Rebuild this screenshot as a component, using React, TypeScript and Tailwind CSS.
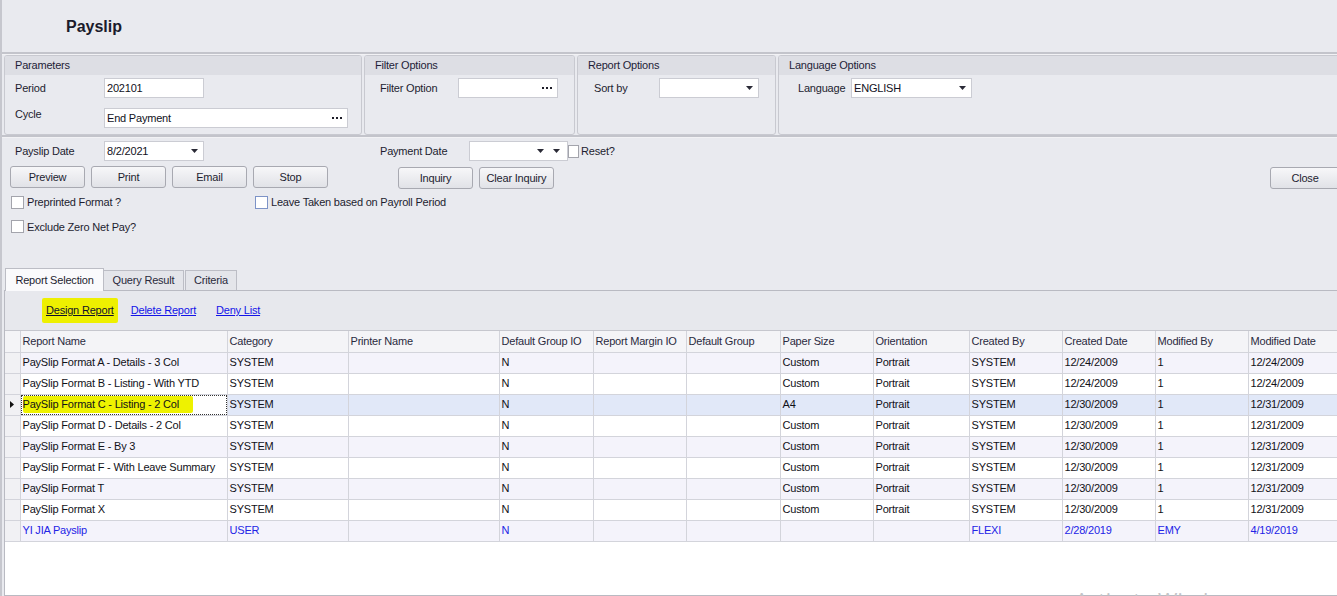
import React from 'react'

function Arrow() {
  return (
    <svg width="7" height="4" viewBox="0 0 7 4" className="shrink-0">
      <path d="M0 0h7L3.5 4z" fill="#2a2a36" />
    </svg>
  )
}

function Dots() {
  return (
    <svg width="10" height="2" viewBox="0 0 10 2" className="shrink-0">
      <rect x="0" y="0" width="2" height="2" fill="#1d1d28" />
      <rect x="4" y="0" width="2" height="2" fill="#1d1d28" />
      <rect x="8" y="0" width="2" height="2" fill="#1d1d28" />
    </svg>
  )
}

function Field({ w, value, kind }: { w: string; value?: string; kind?: 'dots' | 'arrow' | 'double' }) {
  return (
    <div className={`${w} h-[20px] shrink-0 bg-white border border-[#cbccd3] flex items-center pl-[2px] pr-[5px] text-[#111122]`}>
      <span className="flex-1 truncate">{value}</span>
      {kind == 'dots' && <Dots />}
      {kind == 'arrow' && <Arrow />}
      {kind == 'double' && (
        <div className="flex gap-[9px] pr-[2px]">
          <Arrow />
          <Arrow />
        </div>
      )}
    </div>
  )
}

function Btn({ label, w = 'w-[75px]' }: { label: string; w?: string }) {
  return (
    <div className={`${w} h-[22px] shrink-0 rounded-[3px] border border-[#a8a9b1] bg-gradient-to-b from-[#f7f7f9] to-[#e1e2e7] flex items-center justify-center text-[#1d1d30]`}>
      {label}
    </div>
  )
}

function Check({ blue }: { blue?: boolean }) {
  return (
    <div className={`w-[13px] h-[13px] shrink-0 bg-white border ${blue ? 'border-[#7d93c7]' : 'border-[#a3a4ac]'}`} />
  )
}

function Group({ title, w, children }: { title: string; w: string; children?: React.ReactNode }) {
  return (
    <div className={`${w} h-[80px] border border-[#c8c9d0] rounded-[3px] flex flex-col overflow-hidden`}>
      <div className="h-[19px] shrink-0 bg-[#dddee4] pl-[10px] flex items-center text-[#1d1d38]">{title}</div>
      <div className="flex-1">{children}</div>
    </div>
  )
}

const cols = [15, 207, 121, 151, 94, 93, 94, 93, 96, 93, 93, 93, 120]
const heads = ['', 'Report Name', 'Category', 'Printer Name', 'Default Group IO', 'Report Margin IO', 'Default Group', 'Paper Size', 'Orientation', 'Created By', 'Created Date', 'Modified By', 'Modified Date']

const rows = [
  ['PaySlip Format A - Details - 3 Col', 'SYSTEM', 'Custom', 'Portrait', 'SYSTEM', '12/24/2009', '1', '12/24/2009'],
  ['PaySlip Format B - Listing - With YTD', 'SYSTEM', 'Custom', 'Portrait', 'SYSTEM', '12/24/2009', '1', '12/24/2009'],
  ['PaySlip Format C - Listing - 2 Col', 'SYSTEM', 'A4', 'Portrait', 'SYSTEM', '12/30/2009', '1', '12/31/2009'],
  ['PaySlip Format D - Details - 2 Col', 'SYSTEM', 'Custom', 'Portrait', 'SYSTEM', '12/30/2009', '1', '12/31/2009'],
  ['PaySlip Format E - By 3', 'SYSTEM', 'Custom', 'Portrait', 'SYSTEM', '12/30/2009', '1', '12/31/2009'],
  ['PaySlip Format F - With Leave Summary', 'SYSTEM', 'Custom', 'Portrait', 'SYSTEM', '12/30/2009', '1', '12/31/2009'],
  ['PaySlip Format T', 'SYSTEM', 'Custom', 'Portrait', 'SYSTEM', '12/30/2009', '1', '12/31/2009'],
  ['PaySlip Format X', 'SYSTEM', 'Custom', 'Portrait', 'SYSTEM', '12/30/2009', '1', '12/31/2009'],
  ['YI JIA Payslip', 'USER', '', '', 'FLEXI', '2/28/2019', 'EMY', '4/19/2019'],
]

export default function App() {
  return (
    <div className="relative w-[1337px] h-[596px] overflow-hidden bg-[#e9eaef] border-l-2 border-[#c6c7ce] font-['Liberation_Sans',Arial,sans-serif] text-[11px] tracking-[-0.2px] text-[#1d1d30] flex flex-col">
      {/* title */}
      <div className="h-[52px] shrink-0 flex items-center pl-[64px] pt-[2px]">
        <h1 className="text-[16px] font-bold tracking-normal text-[#1b1b2b]">Payslip</h1>
      </div>
      <div className="h-[3px] shrink-0 border-t-2 border-[#c3c4cb] bg-[#f2f2f5]" />

      {/* option groups */}
      <div className="h-[80px] shrink-0 flex gap-[2px] pl-[2px]">
        <Group title="Parameters" w="w-[358px]">
          <div className="flex items-center pl-[10px] mt-[3px]">
            <span className="w-[89px]">Period</span>
            <Field w="w-[100px]" value="202101" />
          </div>
          <div className="flex pl-[10px] mt-[10px]">
            <span className="w-[89px] -mt-[2px]">Cycle</span>
            <Field w="w-[244px]" value="End Payment" kind="dots" />
          </div>
        </Group>
        <Group title="Filter Options" w="w-[211px]">
          <div className="flex items-center pl-[15px] mt-[3px]">
            <span className="w-[78px]">Filter Option</span>
            <Field w="w-[100px]" kind="dots" />
          </div>
        </Group>
        <Group title="Report Options" w="w-[199px]">
          <div className="flex items-center pl-[16px] mt-[3px]">
            <span className="w-[65px]">Sort by</span>
            <Field w="w-[100px]" kind="arrow" />
          </div>
        </Group>
        <Group title="Language Options" w="flex-1 -mr-[4px]">
          <div className="flex items-center pl-[19px] mt-[3px]">
            <span className="w-[53px]">Language</span>
            <Field w="w-[121px]" value="ENGLISH" kind="arrow" />
          </div>
        </Group>
      </div>
      <div className="h-[3px] shrink-0 border-t-2 border-[#c3c4cb] bg-[#f2f2f5]" />

      {/* actions */}
      <div className="h-[127px] shrink-0 flex flex-col">
        <div className="flex items-center pl-[13px] mt-[3px]">
          <span className="w-[89px]">Payslip Date</span>
          <Field w="w-[100px]" value="8/2/2021" kind="arrow" />
          <span className="w-[176px] shrink-0" />
          <span className="w-[89px] shrink-0">Payment Date</span>
          <Field w="w-[99px]" kind="double" />
          <div className="w-[11px] h-[13px] bg-white border border-[#a3a4ac]" />
          <span className="ml-[2px]">Reset?</span>
        </div>
        <div className="flex items-start pl-[8px] mt-[5px] pr-0">
          <div className="flex gap-[6px]">
            <Btn label="Preview" />
            <Btn label="Print" />
            <Btn label="Email" />
            <Btn label="Stop" />
          </div>
          <div className="flex gap-[6px] ml-[70px] mt-[1px]">
            <Btn label="Inquiry" />
            <Btn label="Clear Inquiry" />
          </div>
          <div className="ml-auto -mr-[3px] mt-[1px]">
            <Btn label="Close" w="w-[70px]" />
          </div>
        </div>
        <div className="flex items-center pl-[9px] mt-[5px]">
          <div className="w-[244px] flex items-center gap-[3px]">
            <Check />
            <span>Preprinted Format ?</span>
          </div>
          <div className="flex items-center gap-[3px]">
            <Check blue />
            <span>Leave Taken based on Payroll Period</span>
          </div>
        </div>
        <div className="flex items-center gap-[3px] pl-[9px] mt-[8px]">
          <Check />
          <span>Exclude Zero Net Pay?</span>
        </div>
      </div>

      {/* tabs */}
      <div className="h-[25px] shrink-0 flex items-end pl-[3px]">
        <div className="relative z-10 -mb-[1px] w-[99px] h-[23px] bg-[#fafafc] border border-b-0 border-[#bcbdc5] flex items-center justify-center text-[#1d1d30]">
          Report Selection
        </div>
        <div className="w-[80px] h-[20px] bg-[#e4e5ea] border border-b-0 border-l-0 border-[#bcbdc5] flex items-center justify-center text-[#2a2a3c]">
          Query Result
        </div>
        <div className="w-[52px] h-[20px] ml-[1px] bg-[#e4e5ea] border border-b-0 border-[#bcbdc5] flex items-center justify-center text-[#2a2a3c]">
          Criteria
        </div>
      </div>

      <div className="flex-1 ml-[2px] -mr-[4px] border border-[#b9bac2] bg-white flex flex-col">
        <div className="h-[40px] shrink-0 bg-[#e7e8ed] border-b border-[#c6c7ce] flex items-center pl-[37px]">
          <span className="bg-[#eef000] px-[4px] py-[4px] rounded-[2px] text-[#10102a] underline">Design Report</span>
          <span className="ml-[13px] text-[#1414e8] underline">Delete Report</span>
          <span className="ml-[20px] text-[#1414e8] underline">Deny List</span>
        </div>

        <table className="table-fixed border-collapse text-[11px]" style={{ width: cols.reduce((a, b) => a + b, 0) }}>
          <colgroup>
            {cols.map((c, i) => (
              <col key={i} style={{ width: c }} />
            ))}
          </colgroup>
          <thead>
            <tr className="h-[21px]">
              {heads.map((h, i) => (
                <th key={i} className="border-r border-b border-[#d3d4db] bg-[#f4f4f7] text-left font-normal pl-[2px] text-[#2a2a40] whitespace-nowrap overflow-hidden">
                  {h}
                </th>
              ))}
            </tr>
          </thead>
          <tbody>
            {rows.map((r, i) => {
              const sel = i == 2
              const user = i == 8
              const bg = sel ? 'bg-[#e1e8f8]' : i % 2 == 0 ? 'bg-[#f4f3fb]' : 'bg-white'
              const tc = user ? 'text-[#2323e6]' : 'text-[#111118]'
              const cells = [r[0], r[1], '', 'N', '', '', r[2], r[3], r[4], r[5], r[6], r[7]]
              return (
                <tr key={i} className="h-[21px]">
                  <td className="border-r border-b border-[#d3d4db] bg-[#f1f1f4]">
                    {sel && (
                      <svg width="4" height="7" viewBox="0 0 4 7" className="ml-[5px]">
                        <path d="M0 0l4 3.5L0 7z" fill="#111" />
                      </svg>
                    )}
                  </td>
                  {cells.map((c, j) => {
                    if (sel && j == 0) {
                      return (
                        <td key={j} className="border-r border-b border-[#d3d4db] bg-white p-0">
                          <div className="h-[20px] border border-dotted border-[#333] flex items-center pl-[1px] whitespace-nowrap">
                            <span className="bg-[#eef200] pr-[14px] rounded-[2px] text-[#111118]">{c}</span>
                          </div>
                        </td>
                      )
                    }
                    return (
                      <td key={j} className={`border-r border-b border-[#d3d4db] ${bg} ${tc} pl-[2px] whitespace-nowrap overflow-hidden`}>
                        {c}
                      </td>
                    )
                  })}
                </tr>
              )
            })}
          </tbody>
        </table>
      </div>

      <div className="absolute left-[1073px] top-[586px] text-[21px] tracking-normal text-[#c4c4c8] font-['Open_Sans',sans-serif] whitespace-nowrap">
        Activate Windows
      </div>
    </div>
  )
}
